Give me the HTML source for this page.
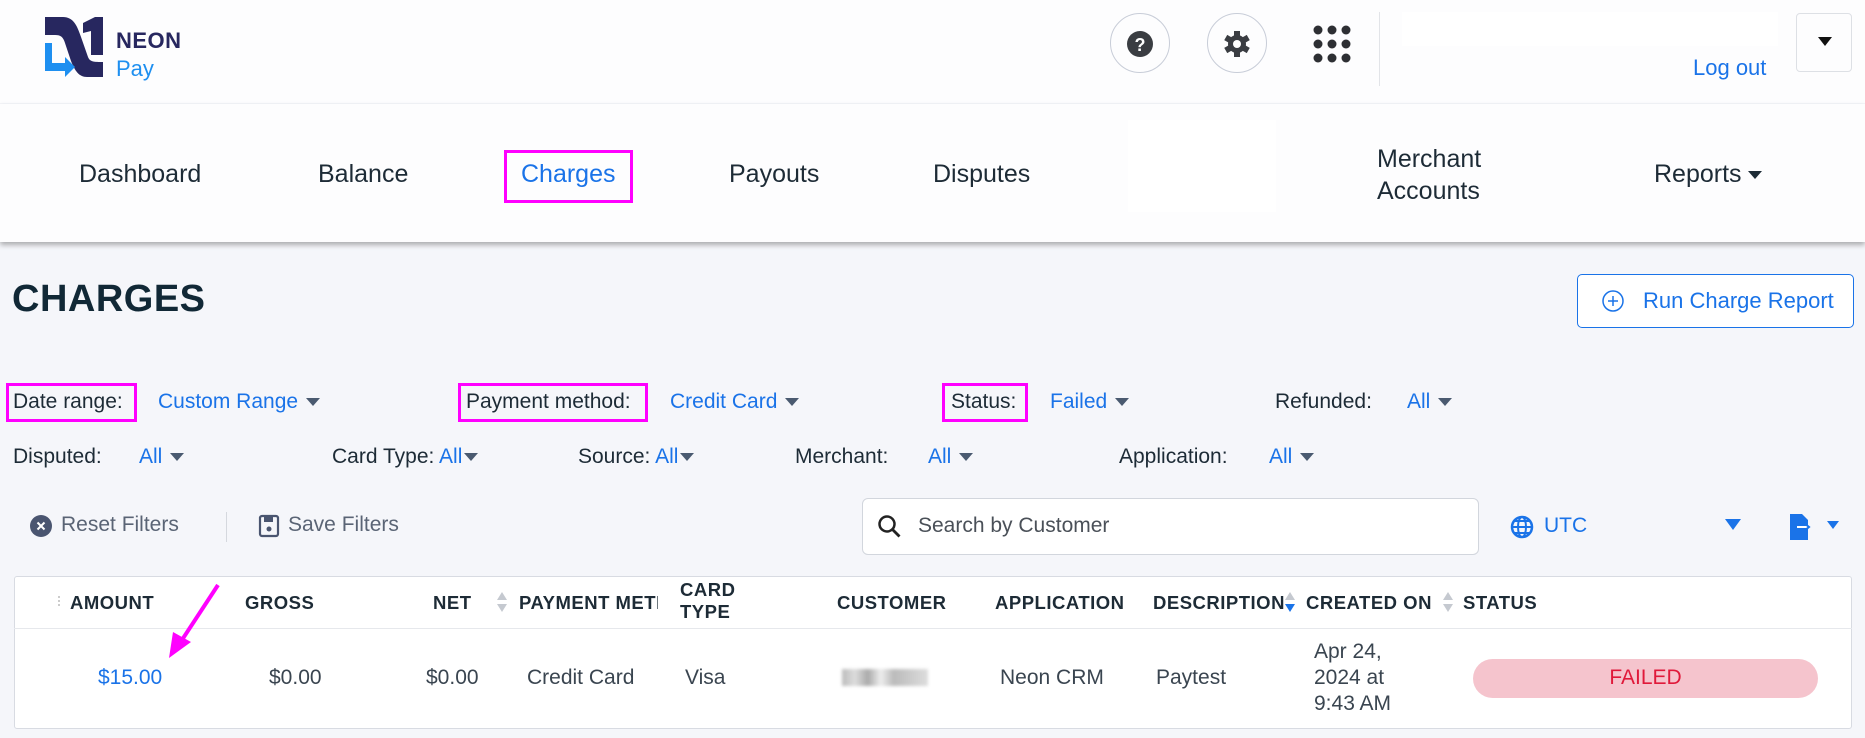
<!DOCTYPE html>
<html><head><meta charset="utf-8">
<style>
*{margin:0;padding:0;box-sizing:border-box}
body{width:1865px;height:738px;overflow:hidden;background:#f5f6fa;font-family:"Liberation Sans",sans-serif;color:#1d2b36;position:relative}
.a{position:absolute;white-space:nowrap}
.hdr{position:absolute;left:0;top:0;width:1865px;height:103px;background:#fdfdfe}
.nav{position:absolute;left:0;top:104px;width:1865px;height:138px;background:#fdfdfe;box-shadow:0 3px 5px rgba(0,0,0,.3)}
.nv{font-size:25px;top:160px;color:#1d2b36}
.f{font-size:21px;color:#1d2b36}
.b{color:#1a73e8 !important}
.car{display:inline-block;width:0;height:0;border-left:7px solid transparent;border-right:7px solid transparent;border-top:8px solid #4a5a70;margin-left:8px;vertical-align:middle}
.mb{position:absolute;border:3px solid #ff00ff}
.th{font-size:18.5px;font-weight:bold;color:#1d2b36;letter-spacing:.5px;top:592px}
.td{font-size:21px;color:#3a4550;top:666px}
.circ{position:absolute;width:60px;height:60px;border-radius:50%;border:1px solid #c8cdd8;background:#fdfdfe}
</style></head><body>
<div class="hdr"></div>
<!-- logo -->
<svg class="a" style="left:45px;top:17px" width="60" height="62" viewBox="0 0 60 62">
<path d="M0 0H18C28 0 32 8 36 20L43 40C45 45 49 45 58 45V60H42C34 60 30 54 26 44L20 26C18 20 16 18 10 18H0Z" fill="#27275f"/>
<path d="M38 6L50 0H58V38H46V14L38 16Z" fill="#27275f"/>
<path d="M0 26H7V46H20V40L30 50L20 60V54H0Z" fill="#1e8ff0"/>
</svg>
<div class="a" style="left:116px;top:28px;font-size:22px;font-weight:bold;color:#27275f;letter-spacing:.5px">NEON</div>
<div class="a" style="left:116px;top:56px;font-size:22px;color:#1e8ff0">Pay</div>
<div class="circ" style="left:1110px;top:13px"></div>
<svg class="a" style="left:1126px;top:29px" width="28" height="30"><circle cx="14" cy="15" r="13" fill="#3a3d42"/><text x="14" y="22" font-size="18" font-weight="bold" fill="#fff" text-anchor="middle" font-family="Liberation Sans">?</text></svg>
<div class="circ" style="left:1207px;top:13px"></div>
<svg class="a" style="left:1223px;top:29px" width="28" height="30" viewBox="0 0 28 30"><g fill="#3a3d42" transform="translate(14 15)"><circle r="9"/><rect x="-3" y="-13" width="6" height="26"/><rect x="-3" y="-13" width="6" height="26" transform="rotate(60)"/><rect x="-3" y="-13" width="6" height="26" transform="rotate(120)"/></g><circle cx="14" cy="15" r="4" fill="#fff"/></svg>
<svg class="a" style="left:1313px;top:25px" width="38" height="40"><g fill="#2d2f33"><circle cx="5" cy="5" r="4.5"/><circle cx="19" cy="5" r="4.5"/><circle cx="33" cy="5" r="4.5"/><circle cx="5" cy="19" r="4.5"/><circle cx="19" cy="19" r="4.5"/><circle cx="33" cy="19" r="4.5"/><circle cx="5" cy="33" r="4.5"/><circle cx="19" cy="33" r="4.5"/><circle cx="33" cy="33" r="4.5"/></g></svg>
<div class="a" style="left:1379px;top:12px;width:1px;height:74px;background:#e2e4e8"></div>
<div class="a" style="left:1402px;top:12px;width:376px;height:34px;background:#fff"></div>
<div class="a b" style="left:1693px;top:55px;font-size:22px">Log out</div>
<div class="a" style="left:1796px;top:13px;width:56px;height:59px;border:1px solid #dde0e5;border-radius:4px;background:#fdfdfe"></div>
<div class="a" style="left:1818px;top:37px;border-left:7px solid transparent;border-right:7px solid transparent;border-top:9px solid #111"></div>

<div class="nav"></div>
<div class="a nv" style="left:79px">Dashboard</div>
<div class="a nv" style="left:318px">Balance</div>
<div class="a nv b" style="left:521px">Charges</div>
<div class="mb" style="left:504px;top:150px;width:129px;height:53px"></div>
<div class="a nv" style="left:729px">Payouts</div>
<div class="a nv" style="left:933px">Disputes</div>
<div class="a" style="left:1128px;top:120px;width:148px;height:92px;background:#fff"></div>
<div class="a nv" style="left:1377px;top:143px;line-height:32px">Merchant<br>Accounts</div>
<div class="a nv" style="left:1654px">Reports<span class="car" style="border-top-color:#1d2b36;margin-left:6px"></span></div>

<div class="a" style="left:12px;top:278px;font-size:38px;font-weight:bold;color:#112836;letter-spacing:.5px">CHARGES</div>
<div class="a" style="left:1577px;top:274px;width:277px;height:54px;border:1.5px solid #1a73e8;border-radius:5px;background:#fff"></div>
<svg class="a" style="left:1601px;top:289px" width="24" height="24"><circle cx="12" cy="12" r="10" fill="none" stroke="#1a73e8" stroke-width="1.5"/><path d="M12 7v10M7 12h10" stroke="#1a73e8" stroke-width="1.5"/></svg>
<div class="a b" style="left:1643px;top:288px;font-size:22px">Run Charge Report</div>

<div class="a f" style="left:13px;top:390px">Date range:</div>
<div class="mb" style="left:6px;top:383px;width:131px;height:39px"></div>
<div class="a f b" style="left:158px;top:390px">Custom Range<span class="car"></span></div>
<div class="a f" style="left:466px;top:390px">Payment method:</div>
<div class="mb" style="left:458px;top:383px;width:190px;height:39px"></div>
<div class="a f b" style="left:670px;top:390px">Credit Card<span class="car"></span></div>
<div class="a f" style="left:951px;top:390px">Status:</div>
<div class="mb" style="left:942px;top:383px;width:86px;height:39px"></div>
<div class="a f b" style="left:1050px;top:390px">Failed<span class="car"></span></div>
<div class="a f" style="left:1275px;top:390px">Refunded:</div>
<div class="a f b" style="left:1407px;top:390px">All<span class="car"></span></div>

<div class="a f" style="left:13px;top:445px">Disputed:</div>
<div class="a f b" style="left:139px;top:445px">All<span class="car"></span></div>
<div class="a f" style="left:332px;top:445px">Card Type: <span class="b">All</span><span class="car" style="margin-left:2px"></span></div>
<div class="a f" style="left:578px;top:445px">Source: <span class="b">All</span><span class="car" style="margin-left:2px"></span></div>
<div class="a f" style="left:795px;top:445px">Merchant:</div>
<div class="a f b" style="left:928px;top:445px">All<span class="car"></span></div>
<div class="a f" style="left:1119px;top:445px">Application:</div>
<div class="a f b" style="left:1269px;top:445px">All<span class="car"></span></div>

<svg class="a" style="left:29px;top:514px" width="24" height="24"><circle cx="12" cy="12" r="11" fill="#4a5570"/><path d="M8.5 8.5l7 7M15.5 8.5l-7 7" stroke="#fff" stroke-width="2"/></svg>
<div class="a f" style="left:61px;top:513px;color:#5a6475">Reset Filters</div>
<div class="a" style="left:226px;top:512px;width:1px;height:30px;background:#d5d8de"></div>
<svg class="a" style="left:258px;top:514px" width="22" height="24"><rect x="2" y="2" width="18" height="20" rx="2" fill="none" stroke="#4a5570" stroke-width="2.2"/><rect x="6" y="2" width="9" height="6" fill="#4a5570"/><circle cx="11" cy="15" r="2.5" fill="#4a5570"/></svg>
<div class="a f" style="left:288px;top:513px;color:#5a6475">Save Filters</div>
<div class="a" style="left:862px;top:498px;width:617px;height:57px;border:1px solid #d2d6dd;border-radius:6px;background:#fff"></div>
<svg class="a" style="left:877px;top:514px" width="26" height="26"><circle cx="10" cy="10" r="7.5" fill="none" stroke="#222" stroke-width="2.5"/><path d="M15.5 15.5l7 7" stroke="#222" stroke-width="2.8"/></svg>
<div class="a f" style="left:918px;top:514px;color:#4a5058">Search by Customer</div>
<svg class="a" style="left:1510px;top:515px" width="24" height="24"><circle cx="12" cy="12" r="10" fill="none" stroke="#1a73e8" stroke-width="2.5"/><ellipse cx="12" cy="12" rx="4" ry="10" fill="none" stroke="#1a73e8" stroke-width="2"/><path d="M2 12h20M4 6h16M4 18h16" stroke="#1a73e8" stroke-width="2"/></svg>
<div class="a f b" style="left:1544px;top:514px">UTC</div>
<div class="a" style="left:1725px;top:519px;border-left:8px solid transparent;border-right:8px solid transparent;border-top:11px solid #1a73e8"></div>
<svg class="a" style="left:1788px;top:512px" width="26" height="30"><path d="M2 2h12l6 6v20H2z" fill="#1a73e8"/><path d="M9 15h11" stroke="#fff" stroke-width="2"/><path d="M16 11l5 4-5 4" stroke="#1a73e8" stroke-width="2" fill="none"/></svg>
<div class="a" style="left:1827px;top:521px;border-left:6px solid transparent;border-right:6px solid transparent;border-top:8px solid #1a73e8"></div>

<div class="a" style="left:14px;top:576px;width:1838px;height:153px;background:#fff;border:1px solid #d8dbe2;border-radius:3px"></div>
<div class="a" style="left:14px;top:628px;width:1838px;height:1px;background:#e6e8ec"></div>
<div class="a" style="left:58px;top:596px;width:2px;height:10px;border-left:2px dotted #ccc"></div>
<div class="a th" style="left:70px;top:592px">AMOUNT</div>
<div class="a th" style="left:245px">GROSS</div>
<div class="a th" style="left:433px">NET</div>
<svg class="a" style="left:496px;top:590px" width="12" height="24"><path d="M6 2l5 8H1zM6 22l5-8H1z" fill="#c5c9d0"/></svg>
<div class="a th" style="left:519px;width:139px;overflow:hidden">PAYMENT METHOD</div>
<div class="a th" style="left:680px;top:579px;line-height:22px">CARD<br>TYPE</div>
<div class="a th" style="left:837px">CUSTOMER</div>
<div class="a th" style="left:995px;width:134px;overflow:hidden">APPLICATION</div>
<div class="a th" style="left:1153px;width:132px;overflow:hidden">DESCRIPTION</div>
<svg class="a" style="left:1284px;top:590px" width="12" height="24"><path d="M6 2l5 8H1z" fill="#c5c9d0"/><path d="M6 22l5-8H1z" fill="#1a73e8"/></svg>
<div class="a th" style="left:1306px">CREATED ON</div>
<svg class="a" style="left:1442px;top:590px" width="12" height="24"><path d="M6 2l5 8H1zM6 22l5-8H1z" fill="#c5c9d0"/></svg>
<div class="a th" style="left:1463px">STATUS</div>

<div class="a td b" style="left:98px">$15.00</div>
<div class="a td" style="left:269px">$0.00</div>
<div class="a td" style="left:426px">$0.00</div>
<div class="a td" style="left:527px">Credit Card</div>
<div class="a td" style="left:685px">Visa</div>
<div class="a" style="left:842px;top:669px;width:86px;height:17px;background:linear-gradient(90deg,#bbb 0,#ddd 15%,#aaa 30%,#eee 45%,#bbb 60%,#ccc 80%,#ddd 100%);filter:blur(1.5px)"></div>
<div class="a td" style="left:1000px">Neon CRM</div>
<div class="a td" style="left:1156px">Paytest</div>
<div class="a td" style="left:1314px;top:639px;line-height:26px">Apr 24,<br>2024 at<br>9:43 AM</div>
<div class="a" style="left:1473px;top:659px;width:345px;height:39px;border-radius:20px;background:#f5c4cd"></div>
<div class="a" style="left:1473px;top:666px;width:345px;text-align:center;font-size:21px;color:#e0193a">FAILED</div>

<svg class="a" style="left:160px;top:580px" width="70" height="82"><path d="M58 5L18 66" stroke="#ff00ff" stroke-width="4"/><path d="M9 78l4-26 18 10z" fill="#ff00ff"/></svg>
</body></html>
